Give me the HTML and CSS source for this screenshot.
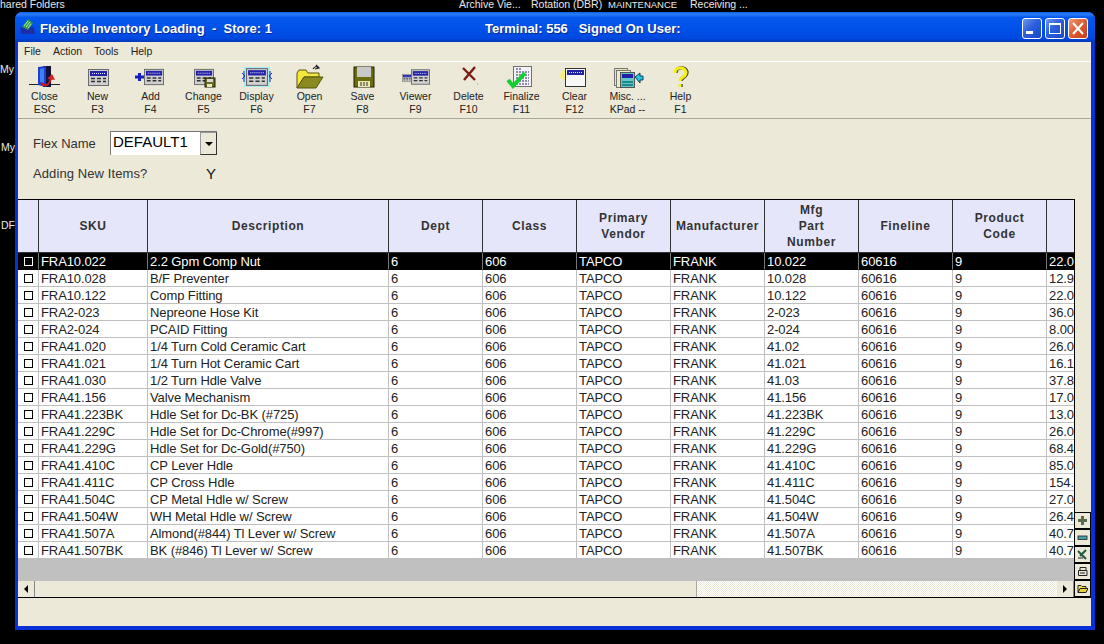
FILE: index.html
```html
<!DOCTYPE html>
<html lang="en">
<head>
    <meta charset="UTF-8">
    <title>Flexible Inventory Loading</title>
    <link rel="stylesheet" href="styles.css">
</head>
<body>

    <!-- Desktop icon captions peeking out around the window -->
    <span class="desk-text" id="desk-shared">hared Folders</span>
    <span class="desk-text" id="desk-archive">Archive Vie...</span>
    <span class="desk-text" id="desk-rotation">Rotation (DBR)</span>
    <span class="desk-text" id="desk-maint">MAINTENANCE</span>
    <span class="desk-text" id="desk-receiving">Receiving ...</span>
    <span class="desk-text" id="desk-my1">My</span>
    <span class="desk-text" id="desk-my2">My</span>
    <span class="desk-text" id="desk-df">DF</span>

    <svg class="defs" width="0" height="0">
        <defs>
            <symbol id="win" viewBox="0 0 21 17">
                <rect x="0.5" y="0.5" width="20" height="16" fill="#d0d0d0" stroke="#6a6a6a"/>
                <rect x="2" y="2" width="17" height="5" fill="#2222a8"/>
                <path d="M4 4.5h13" stroke="#e8e8ff" stroke-dasharray="1 1"/>
                <path d="M3 9.5h4M9 9.5h4M15 9.5h3M3 12.5h4M9 12.5h4M15 12.5h3" stroke="#303030" stroke-width="1.5"/>
            </symbol>
        </defs>
    </svg>

    <div class="window">
        <div class="title-bar">
            <svg class="app-icon" width="15" height="16" viewBox="0 0 15 16">
                <path d="M0 9l6-2 8 1 1 7H1z" fill="#1c2fa8"/>
                <path d="M2 8l6-8 5 4-5 7z" fill="#2f9a52"/>
                <path d="M4 7l4-5M6 8l4-5M8 9l3-4" stroke="#b7e8a8"/>
            </svg>
            <span class="title-left">Flexible Inventory Loading  -  Store: 1</span>
            <span class="title-right">Terminal: 556   Signed On User:</span>
            <div class="win-buttons">
                <div class="win-btn">
                    <svg width="18" height="19" viewBox="0 0 18 19"><rect x="3" y="12" width="7" height="3" fill="#fff"/></svg>
                </div>
                <div class="win-btn">
                    <svg width="18" height="19" viewBox="0 0 18 19"><rect x="3.5" y="4.5" width="11" height="10" fill="none" stroke="#fff"/><rect x="3" y="4" width="12" height="2" fill="#fff"/></svg>
                </div>
                <div class="win-btn close">
                    <svg width="18" height="19" viewBox="0 0 18 19"><path d="M4 4l10 11M14 4L4 15" stroke="#fff" stroke-width="2"/></svg>
                </div>
            </div>
        </div>

        <div class="menu-bar">
            <span>File</span>
            <span>Action</span>
            <span>Tools</span>
            <span>Help</span>
        </div>

        <div class="toolbar">
            <div class="tool">
                <svg width="32" height="25" viewBox="0 0 32 25">
                    <path d="M0 20.5h31" stroke="#222"/>
                    <rect x="14" y="2" width="8" height="21" fill="#10103a"/>
                    <path d="M9 3l8-1v21l-8-2z" fill="#1f3fd0"/>
                    <path d="M11 5l4-1v15l-4-1z" fill="#3f7ff0"/>
                    <path d="M12 19q6 6 10-4" fill="none" stroke="#c81818" stroke-width="2"/>
                    <path d="M18 15l5-5 3 6z" fill="#d42020"/>
                </svg>
                <span>Close</span><span>ESC</span>
            </div>
            <div class="tool">
                <svg width="32" height="25" viewBox="0 0 32 25"><use href="#win" x="6" y="5" width="21" height="17"/></svg>
                <span>New</span><span>F3</span>
            </div>
            <div class="tool">
                <svg width="32" height="25" viewBox="0 0 32 25">
                    <use href="#win" x="9" y="4" width="20" height="18"/>
                    <path d="M0 13h9M4.5 9v8" stroke="#1420c0" stroke-width="3"/>
                </svg>
                <span>Add</span><span>F4</span>
            </div>
            <div class="tool">
                <svg width="32" height="25" viewBox="0 0 32 25">
                    <use href="#win" x="6" y="4" width="20" height="18"/>
                    <rect x="17" y="14" width="10" height="9" fill="#6a6a20" stroke="#202000"/>
                    <rect x="19" y="15" width="6" height="3" fill="#d8d8d8"/>
                    <rect x="19" y="20" width="5" height="3" fill="#e8e8c0"/>
                </svg>
                <span>Change</span><span>F5</span>
            </div>
            <div class="tool">
                <svg width="32" height="25" viewBox="0 0 32 25">
                    <rect x="3" y="3" width="26" height="20" fill="#a8ecf4"/>
                    <use href="#win" x="5" y="4" width="22" height="18"/>
                    <path d="M1 9l3 3-3 3M3 7v11M31 9l-3 3 3 3M29 7v11" fill="none" stroke="#1030b0"/>
                </svg>
                <span>Display</span><span>F6</span>
            </div>
            <div class="tool">
                <svg width="32" height="25" viewBox="0 0 32 25">
                    <path d="M3 24V9l2-3h7l2 3h11v4H10z" fill="#f4e63c" stroke="#555510"/>
                    <path d="M3 24l7-11h19l-7 11z" fill="#8a8a20" stroke="#555510"/>
                    <path d="M19 5q3-4 5-1M22 1l3 3-4 1" fill="none" stroke="#222" stroke-width="1.2"/>
                </svg>
                <span>Open</span><span>F7</span>
            </div>
            <div class="tool">
                <svg width="32" height="25" viewBox="0 0 32 25">
                    <rect x="7" y="3" width="20" height="20" fill="#6b6b10" stroke="#1f1f00"/>
                    <rect x="10" y="3" width="14" height="10" fill="#c8c8c8"/>
                    <rect x="11" y="17" width="12" height="6" fill="#e8e8b0"/>
                    <path d="M14 18v4M17 18v4M20 18v4" stroke="#333"/>
                </svg>
                <span>Save</span><span>F8</span>
            </div>
            <div class="tool">
                <svg width="32" height="25" viewBox="0 0 32 25">
                    <use href="#win" x="2" y="8" width="10" height="12"/>
                    <use href="#win" x="11" y="4" width="19" height="18"/>
                </svg>
                <span>Viewer</span><span>F9</span>
            </div>
            <div class="tool">
                <svg width="32" height="25" viewBox="0 0 32 25">
                    <path d="M10 4l12 12M22 3L11 16" stroke="#7a1c14" stroke-width="2.4"/>
                    <path d="M24 20h1" stroke="#999"/>
                </svg>
                <span>Delete</span><span>F10</span>
            </div>
            <div class="tool">
                <svg width="32" height="25" viewBox="0 0 32 25">
                    <rect x="7.5" y="2.5" width="18" height="20" fill="#f4f4f8" stroke="#707070"/>
                    <path d="M10 5h6M10 8h13M10 11h13M10 14h13M10 17h13M10 20h13" stroke="#24246a" stroke-dasharray="2 1"/>
                    <path d="M2 16l5 6L19 9" fill="none" stroke="#10d030" stroke-width="4"/>
                </svg>
                <span>Finalize</span><span>F11</span>
            </div>
            <div class="tool">
                <svg width="32" height="25" viewBox="0 0 32 25">
                    <circle cx="6" cy="11" r="5" fill="#f8f080"/>
                    <rect x="6.5" y="4.5" width="20" height="18" fill="#f8f8f8" stroke="#333"/>
                    <rect x="8" y="6" width="17" height="5" fill="#2222a8"/>
                    <path d="M10 8.5h13" stroke="#e8e8ff" stroke-dasharray="1 1"/>
                </svg>
                <span>Clear</span><span>F12</span>
            </div>
            <div class="tool">
                <svg width="32" height="25" viewBox="0 0 32 25">
                    <rect x="2.5" y="4.5" width="13" height="17" fill="#e8e4b0" stroke="#777"/>
                    <rect x="4.5" y="6.5" width="14" height="17" fill="#f0ecc4" stroke="#777"/>
                    <rect x="8.5" y="8.5" width="14" height="15" fill="#60c8c8" stroke="#555"/>
                    <rect x="10" y="10" width="11" height="4" fill="#2222a8"/>
                    <path d="M10 18h11M10 21h11" stroke="#1e8a8a" stroke-width="2"/>
                    <path d="M23 13l5-4v3h3v4h-3v3z" fill="#22c4e0" stroke="#10405a"/>
                </svg>
                <span>Misc. ...</span><span>KPad --</span>
            </div>
            <div class="tool">
                <svg width="32" height="25" viewBox="0 0 32 25">
                    <path d="M11 9q0-5 5-5t6 4q0 3-3 5t-3 4M16 20v3" fill="none" stroke="#44442a" stroke-width="3.4"/>
                    <path d="M10 9q0-5 5-5t6 4q0 3-3 5t-3 4M15 20v3" fill="none" stroke="#f6f018" stroke-width="3"/>
                </svg>
                <span>Help</span><span>F1</span>
            </div>
        </div>

        <div class="flex-form">
            <div class="form-row">
                <label class="flex-label">Flex Name</label>
                <div class="combo">
                    <div class="combo-value">DEFAULT1</div>
                    <div class="combo-btn"></div>
                </div>
            </div>
            <div class="form-row adding-row">
                <label class="adding-label">Adding New Items?</label>
                <span class="adding-value">Y</span>
            </div>
        </div>

        <div class="grid-area">
            <div class="grid">
                <table>
                    <colgroup>
                        <col class="c-check"><col class="c-sku"><col class="c-desc">
                        <col class="c-std"><col class="c-std"><col class="c-std"><col class="c-std">
                        <col class="c-std"><col class="c-std"><col class="c-std"><col class="c-last">
                    </colgroup>
                    <thead>
                        <tr>
                            <th></th><th>SKU</th><th>Description</th><th>Dept</th><th>Class</th>
                            <th>Primary<br>Vendor</th><th>Manufacturer</th><th>Mfg<br>Part<br>Number</th>
                            <th>Fineline</th><th>Product<br>Code</th><th></th>
                        </tr>
                    </thead>
                    <tbody>
                        <tr class="selected"><td><i class="check"></i></td><td>FRA10.022</td><td>2.2 Gpm Comp Nut</td><td>6</td><td>606</td><td>TAPCO</td><td>FRANK</td><td>10.022</td><td>60616</td><td>9</td><td>22.0</td></tr>
                        <tr><td><i class="check"></i></td><td>FRA10.028</td><td>B/F Preventer</td><td>6</td><td>606</td><td>TAPCO</td><td>FRANK</td><td>10.028</td><td>60616</td><td>9</td><td>12.9</td></tr>
                        <tr><td><i class="check"></i></td><td>FRA10.122</td><td>Comp Fitting</td><td>6</td><td>606</td><td>TAPCO</td><td>FRANK</td><td>10.122</td><td>60616</td><td>9</td><td>22.0</td></tr>
                        <tr><td><i class="check"></i></td><td>FRA2-023</td><td>Nepreone Hose Kit</td><td>6</td><td>606</td><td>TAPCO</td><td>FRANK</td><td>2-023</td><td>60616</td><td>9</td><td>36.0</td></tr>
                        <tr><td><i class="check"></i></td><td>FRA2-024</td><td>PCAID Fitting</td><td>6</td><td>606</td><td>TAPCO</td><td>FRANK</td><td>2-024</td><td>60616</td><td>9</td><td>8.00</td></tr>
                        <tr><td><i class="check"></i></td><td>FRA41.020</td><td>1/4 Turn Cold Ceramic Cart</td><td>6</td><td>606</td><td>TAPCO</td><td>FRANK</td><td>41.02</td><td>60616</td><td>9</td><td>26.0</td></tr>
                        <tr><td><i class="check"></i></td><td>FRA41.021</td><td>1/4 Turn Hot Ceramic Cart</td><td>6</td><td>606</td><td>TAPCO</td><td>FRANK</td><td>41.021</td><td>60616</td><td>9</td><td>16.1</td></tr>
                        <tr><td><i class="check"></i></td><td>FRA41.030</td><td>1/2 Turn Hdle Valve</td><td>6</td><td>606</td><td>TAPCO</td><td>FRANK</td><td>41.03</td><td>60616</td><td>9</td><td>37.8</td></tr>
                        <tr><td><i class="check"></i></td><td>FRA41.156</td><td>Valve Mechanism</td><td>6</td><td>606</td><td>TAPCO</td><td>FRANK</td><td>41.156</td><td>60616</td><td>9</td><td>17.0</td></tr>
                        <tr><td><i class="check"></i></td><td>FRA41.223BK</td><td>Hdle Set for Dc-BK (#725)</td><td>6</td><td>606</td><td>TAPCO</td><td>FRANK</td><td>41.223BK</td><td>60616</td><td>9</td><td>13.0</td></tr>
                        <tr><td><i class="check"></i></td><td>FRA41.229C</td><td>Hdle Set for Dc-Chrome(#997)</td><td>6</td><td>606</td><td>TAPCO</td><td>FRANK</td><td>41.229C</td><td>60616</td><td>9</td><td>26.0</td></tr>
                        <tr><td><i class="check"></i></td><td>FRA41.229G</td><td>Hdle Set for Dc-Gold(#750)</td><td>6</td><td>606</td><td>TAPCO</td><td>FRANK</td><td>41.229G</td><td>60616</td><td>9</td><td>68.4</td></tr>
                        <tr><td><i class="check"></i></td><td>FRA41.410C</td><td>CP Lever Hdle</td><td>6</td><td>606</td><td>TAPCO</td><td>FRANK</td><td>41.410C</td><td>60616</td><td>9</td><td>85.0</td></tr>
                        <tr><td><i class="check"></i></td><td>FRA41.411C</td><td>CP Cross Hdle</td><td>6</td><td>606</td><td>TAPCO</td><td>FRANK</td><td>41.411C</td><td>60616</td><td>9</td><td>154.</td></tr>
                        <tr><td><i class="check"></i></td><td>FRA41.504C</td><td>CP Metal Hdle w/ Screw</td><td>6</td><td>606</td><td>TAPCO</td><td>FRANK</td><td>41.504C</td><td>60616</td><td>9</td><td>27.0</td></tr>
                        <tr><td><i class="check"></i></td><td>FRA41.504W</td><td>WH Metal Hdle w/ Screw</td><td>6</td><td>606</td><td>TAPCO</td><td>FRANK</td><td>41.504W</td><td>60616</td><td>9</td><td>26.4</td></tr>
                        <tr><td><i class="check"></i></td><td>FRA41.507A</td><td>Almond(#844) Tl Lever w/ Screw</td><td>6</td><td>606</td><td>TAPCO</td><td>FRANK</td><td>41.507A</td><td>60616</td><td>9</td><td>40.7</td></tr>
                        <tr><td><i class="check"></i></td><td>FRA41.507BK</td><td>BK (#846) Tl Lever w/ Screw</td><td>6</td><td>606</td><td>TAPCO</td><td>FRANK</td><td>41.507BK</td><td>60616</td><td>9</td><td>40.7</td></tr>
                    </tbody>
                </table>
                <div class="grid-empty"></div>
                <div class="scrollbar">
                    <div class="scroll-btn"><b class="arrow-left"></b></div>
                    <div class="scroll-thumb"></div>
                    <div class="scroll-track"></div>
                    <div class="scroll-btn"><b class="arrow-right"></b></div>
                </div>
            </div>
            <div class="side-tools">
                <div class="side-btn">
                    <svg width="11" height="11" viewBox="0 0 11 11"><path d="M5.5 1v9M1 5.5h9" stroke="#5a6a50" stroke-width="3"/></svg>
                </div>
                <div class="side-btn">
                    <svg width="11" height="11" viewBox="0 0 11 11"><rect x="1" y="4" width="9" height="3.5" fill="#4aa0a8" stroke="#222" stroke-width=".8"/></svg>
                </div>
                <div class="side-btn">
                    <svg width="11" height="11" viewBox="0 0 11 11"><path d="M1 2l8 8M9 1L3 7" stroke="#1f5a3a" stroke-width="2"/><path d="M1 9h5" stroke="#222"/></svg>
                </div>
                <div class="side-btn">
                    <svg width="11" height="11" viewBox="0 0 11 11"><path d="M3 4V1.5h6V4M1.5 4.5h8.5v5H1.5z" fill="#e8e8d8" stroke="#222"/><path d="M3 7h5" stroke="#222"/></svg>
                </div>
                <div class="side-btn">
                    <svg width="11" height="11" viewBox="0 0 11 11"><path d="M1 9.5v-7h3l1 1h4v2" fill="#f0e060" stroke="#222"/><path d="M1 9.5l2-4h8l-2 4z" fill="#e8d040" stroke="#222"/></svg>
                </div>
            </div>
        </div>

        <div class="status-bar"></div>
    </div>

</body>
</html>
```

FILE: styles.css
```css
/* Basic reset */
* {
    margin: 0;
    padding: 0;
    box-sizing: border-box;
}

body {
    width: 1104px;
    height: 644px;
    overflow: hidden;
    position: relative;
    background-color: #000;
    font-family: 'Liberation Sans', Arial, sans-serif;
    color: #000;
}

.defs {
    position: absolute;
}

/* Desktop captions behind the window */
.desk-text {
    position: absolute;
    color: #e8e8e8;
    font-size: 10.5px;
    line-height: 13px;
    white-space: nowrap;
}

#desk-shared { left: 0; top: -2px; }
#desk-archive { left: 459px; top: -2px; }
#desk-rotation { left: 531px; top: -2px; }
#desk-maint { left: 608px; top: -2px; font-size: 9.5px; }
#desk-receiving { left: 690px; top: -2px; }
#desk-my1 { left: 0; top: 63px; }
#desk-my2 { left: 1px; top: 141px; }
#desk-df { left: 1px; top: 219px; }

/* Main window */
.window {
    position: absolute;
    left: 15px;
    top: 12px;
    width: 1080px;
    height: 618px;
    display: flex;
    flex-direction: column;
    background-color: #ece9d8;
    border-style: solid;
    border-width: 0 4px 4px 3px;
    border-color: #0831d9;
    border-radius: 7px 7px 0 0;
}

/* Title bar */
.title-bar {
    height: 30px;
    margin: 0 -4px 0 -3px;
    padding: 3px 7px 0 5px;
    display: flex;
    align-items: center;
    flex-shrink: 0;
    color: #fff;
    font-size: 13px;
    font-weight: bold;
    text-shadow: 1px 1px 0 #0a2a90;
    border-radius: 7px 7px 0 0;
    background: linear-gradient(to bottom, #0a5fe8 0%, #2a7cf4 8%, #0558ec 18%, #0050e8 60%, #0048e0 88%, #0038b8 100%);
}

.app-icon {
    flex-shrink: 0;
    margin-top: -3px;
}

.title-left {
    margin-left: 5px;
    width: 445px;
    white-space: pre;
}

.title-right {
    flex: 1;
    white-space: pre;
}

.win-buttons {
    display: flex;
    gap: 3px;
}

.win-btn {
    width: 20px;
    height: 21px;
    border: 1px solid #fff;
    border-radius: 3px;
    overflow: hidden;
    background: linear-gradient(135deg, #6f96ee 0%, #2c5fdc 45%, #1a48c4 100%);
}

.win-btn svg {
    display: block;
}

.win-btn.close {
    background: linear-gradient(135deg, #ec9a7c 0%, #dc5c30 50%, #c83c14 100%);
}

/* Menu */
.menu-bar {
    height: 19px;
    padding: 0 0 2px 6px;
    display: flex;
    align-items: center;
    gap: 12px;
    flex-shrink: 0;
    font-size: 10.5px;
    color: #222;
}

/* Toolbar */
.toolbar {
    height: 58px;
    display: flex;
    flex-shrink: 0;
    border-top: 1px solid #fff;
    border-bottom: 1px solid #aca899;
    padding-top: 2px;
}

.tool {
    width: 53px;
    display: flex;
    flex-direction: column;
    align-items: center;
    font-size: 10.5px;
    line-height: 13px;
    color: #222;
    white-space: nowrap;
}

.tool svg {
    display: block;
    height: 25px;
    margin-bottom: 1px;
}

/* Flex name form */
.flex-form {
    height: 80px;
    flex-shrink: 0;
    padding: 12px 0 0 15px;
    font-size: 13px;
    color: #333;
}

.form-row {
    display: flex;
    align-items: center;
}

.flex-label {
    width: 77px;
}

.combo {
    width: 107px;
    height: 24px;
    display: flex;
    background-color: #fff;
    border-top: 1px solid #777;
    border-left: 1px solid #777;
}

.combo-value {
    flex: 1;
    padding-left: 2px;
    font-size: 15px;
    line-height: 20px;
    color: #000;
}

.combo-btn {
    width: 17px;
    position: relative;
    background-color: #ece9d8;
    border: 1px solid #333;
    border-top-color: #999;
    border-left-color: #999;
}

.combo-btn::after {
    content: "";
    position: absolute;
    left: 4px;
    top: 9px;
    border-style: solid;
    border-width: 4px 4px 0;
    border-color: #000 transparent transparent;
}

.adding-row {
    margin-top: 10px;
}

.adding-label {
    width: 173px;
    letter-spacing: 0.1px;
}

.adding-value {
    font-size: 15px;
    color: #111;
}

/* Data grid */
.grid-area {
    height: 399px;
    display: flex;
    flex-shrink: 0;
    border-bottom: 1px solid #000;
}

.grid {
    width: 1057px;
    display: flex;
    flex-direction: column;
    border-top: 1px solid #000;
    border-right: 1px solid #000;
}

table {
    width: 1056px;
    table-layout: fixed;
    border-collapse: separate;
    border-spacing: 0;
    flex-shrink: 0;
}

.c-check { width: 21px; }
.c-sku { width: 109px; }
.c-desc { width: 241px; }
.c-std { width: 94px; }
.c-last { width: 27px; }

th {
    height: 53px;
    background-color: #e6e6fa;
    border-right: 1px solid #333;
    border-bottom: 1px solid #333;
    font-size: 12px;
    line-height: 16px;
    letter-spacing: 0.6px;
    color: #333;
    overflow: hidden;
    white-space: nowrap;
}

th:last-child {
    border-right: 0;
}

td {
    height: 17px;
    padding: 2px 0 0 2px;
    background-color: #fff;
    border-right: 1px solid #c0c0c0;
    border-bottom: 1px solid #c0c0c0;
    font-size: 13px;
    line-height: 14px;
    letter-spacing: -0.1px;
    color: #222;
    overflow: hidden;
    white-space: nowrap;
}

td:last-child {
    border-right: 0;
}

td:first-child {
    padding: 0;
    text-align: center;
    line-height: 0;
}

.check {
    display: inline-block;
    width: 9px;
    height: 9px;
    border: 1px solid #000;
}

.selected td {
    background-color: #000;
    color: #fff;
    border-bottom-color: #000;
    border-right-color: #777;
}

.selected .check {
    border-color: #fff;
}

.grid-empty {
    flex: 1;
    background-color: #c0c0c0;
}

/* Horizontal scrollbar */
.scrollbar {
    height: 16px;
    display: flex;
    flex-shrink: 0;
    background-color: #ece9d8;
}

.scroll-btn {
    width: 17px;
    display: flex;
    align-items: center;
    justify-content: center;
    border-right: 1px solid #888;
    background-color: #ece9d8;
}

.arrow-left {
    border-style: solid;
    border-width: 4px 4px 4px 0;
    border-color: transparent #000 transparent transparent;
}

.arrow-right {
    border-style: solid;
    border-width: 4px 0 4px 4px;
    border-color: transparent transparent transparent #000;
}

.scroll-thumb {
    width: 662px;
    background-color: #ece9d8;
    border-right: 1px solid #aca899;
}

.scroll-track {
    flex: 1;
    background: repeating-conic-gradient(#fff 0 25%, #ece9d8 0 50%) 0 0 / 2px 2px;
}

/* Small buttons right of the grid */
.side-tools {
    width: 16px;
    display: flex;
    flex-direction: column;
    justify-content: flex-end;
}

.side-btn {
    height: 17px;
    display: flex;
    align-items: center;
    justify-content: center;
    background-color: #ece9d8;
    border: 1px solid #000;
    border-left: 0;
}

.status-bar {
    flex: 1;
}
```
